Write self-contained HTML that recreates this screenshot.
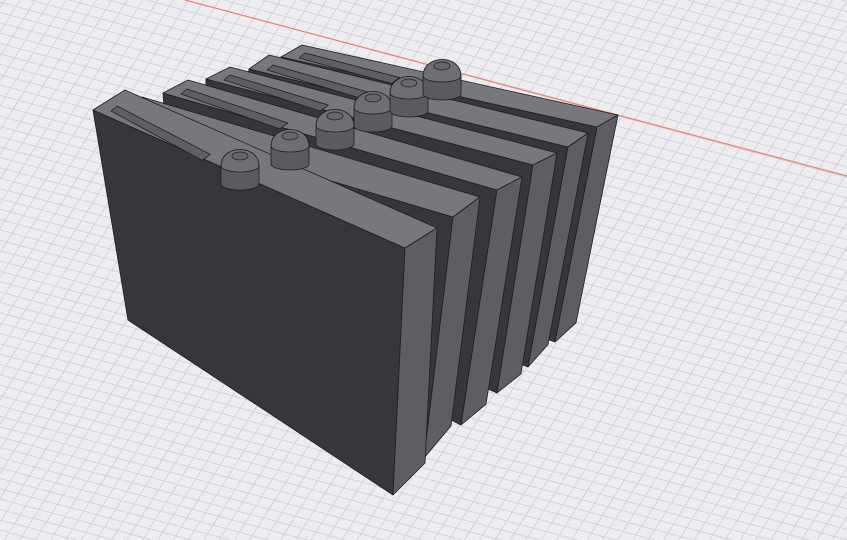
<!DOCTYPE html>
<html><head><meta charset="utf-8"><style>
html,body{margin:0;padding:0;width:847px;height:540px;overflow:hidden;background:#ebebef}
#bg{position:absolute;left:0;top:0;width:847px;height:540px;
background:
repeating-linear-gradient(15deg, transparent 0 9px, #d3d3da 9px 10px),
repeating-linear-gradient(-58deg, transparent 0 12px, #d3d3da 12px 13px),
#ededf1;}
svg{position:absolute;left:0;top:0}
</style></head><body>
<div id="bg"></div>
<svg width="847" height="540" viewBox="0 0 847 540">
<line x1="185" y1="0" x2="847" y2="176" stroke="#f08070" stroke-width="1.2"/>
<g id="plates" stroke="#1e1e22" stroke-width="0.8" stroke-linejoin="round"></g>
<g id="knobs" stroke="#1e1e22" stroke-width="0.8"></g>
</svg>
<script>
var g=document.getElementById('plates');
function poly(pts,fill){var p=document.createElementNS('http://www.w3.org/2000/svg','polygon');p.setAttribute('points',pts.map(function(a){return a[0]+','+a[1]}).join(' '));p.setAttribute('fill',fill);g.appendChild(p);}
var F=[[405,248],[453,217],[497,190],[533,165],[568,147],[597,127]];
var T=[[32,-20],[27,-20],[25,-13],[24,-12],[20,-14],[21,-12]];
var B=[[393,495],[424,458],[461,425],[497,393],[528,367],[555,342]];
var LB=[[115,100],[142,97],[188,80],[230,67],[269,55],[302,45]];
var Lb=[[128,320],[150,300],[175,280],[200,262],[222,246],[245,232]];
for(var i=5;i>=0;i--){
 var t=T[i], ftr=F[i], fbr=B[i];
 var ftl=i==0?[93,110]:[LB[i][0]-t[0],LB[i][1]-t[1]];
 var btl=[ftl[0]+t[0],ftl[1]+t[1]];
 var E=[ftr[0]+t[0],ftr[1]+t[1]];
 poly([ftl,ftr,fbr,Lb[i]],'#36363c');
 poly([ftl,ftr,E,btl],'#77777d');
 // groove strip
 var mx=ftl[0]+(ftr[0]-ftl[0])*0.35, my=ftl[1]+(ftr[1]-ftl[1])*0.35;
 poly([[ftl[0]+18,ftl[1]+1],[mx,my+2],[mx+8,my-4],[ftl[0]+24,ftl[1]-4]],'#5e5e64');
 poly([ftr,E,[fbr[0]+t[0],fbr[1]+t[1]*1.6],fbr],'#5d5d63');
}
var k=document.getElementById('knobs');
var K=[[240,170],[290,150],[335,130],[373,112],[409,97],[442,80]];
K.forEach(function(c){
 var s='<rect x="'+(c[0]-19)+'" y="'+(c[1]-6)+'" width="38" height="20" fill="#5a5a60" stroke="none"/>'+
 '<line x1="'+(c[0]-19)+'" y1="'+(c[1]-6)+'" x2="'+(c[0]-19)+'" y2="'+(c[1]+14)+'"/>'+
 '<line x1="'+(c[0]+19)+'" y1="'+(c[1]-6)+'" x2="'+(c[0]+19)+'" y2="'+(c[1]+14)+'"/>'+
 '<path d="M'+(c[0]-19)+','+(c[1]+14)+' A19,6 0 0 0 '+(c[0]+19)+','+(c[1]+14)+'" fill="#5a5a60"/>'+
 '<path d="M'+(c[0]-19)+','+(c[1]-4)+' C'+(c[0]-19)+','+(c[1]-26)+' '+(c[0]+19)+','+(c[1]-26)+' '+(c[0]+19)+','+(c[1]-4)+' A19,6 0 0 1 '+(c[0]-19)+','+(c[1]-4)+'Z" fill="#6e6e74"/>'+
 '<ellipse cx="'+c[0]+'" cy="'+(c[1]-14)+'" rx="8" ry="4" fill="#66666c"/>';
 k.insertAdjacentHTML('beforeend',s);
});
</script>
</body></html>
